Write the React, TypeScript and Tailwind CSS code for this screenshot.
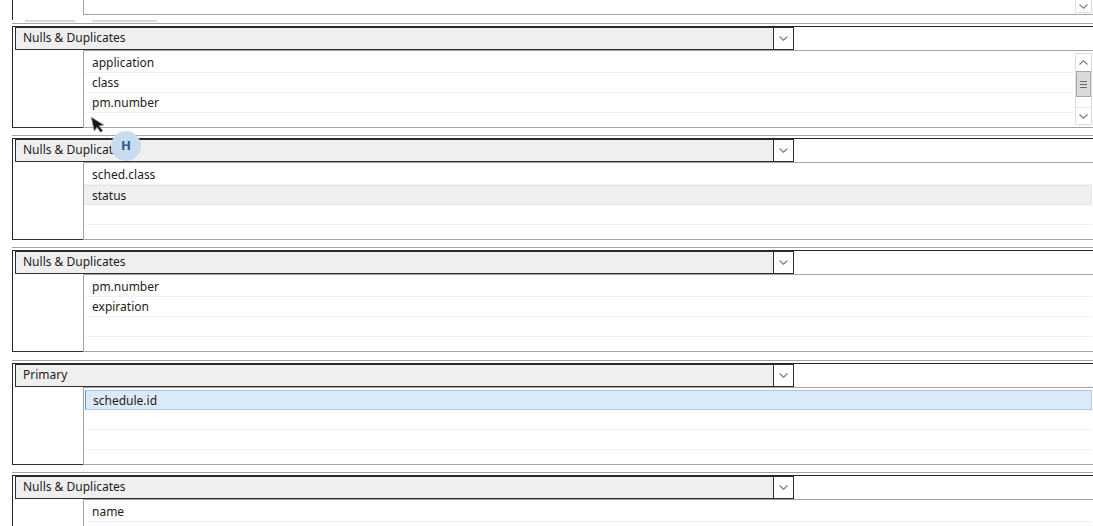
import React from 'react'

type Row = { label: string; kind?: 'plain' | 'gray' | 'selected' }

type Block = {
  title: string
  rows: Row[]
  scroll?: boolean
  tall?: boolean
}

const blocks: Block[] = [
  {
    title: 'Nulls & Duplicates',
    rows: [{ label: 'application' }, { label: 'class' }, { label: 'pm.number' }],
    scroll: true,
  },
  {
    title: 'Nulls & Duplicates',
    rows: [{ label: 'sched.class' }, { label: 'status', kind: 'gray' }],
  },
  {
    title: 'Nulls & Duplicates',
    rows: [{ label: 'pm.number' }, { label: 'expiration' }],
    tall: true,
  },
  {
    title: 'Primary',
    rows: [{ label: 'schedule.id', kind: 'selected' }],
  },
  {
    title: 'Nulls & Duplicates',
    rows: [{ label: 'name' }],
  },
]

function Chevron({ up }: { up?: boolean }) {
  return (
    <svg width="9" height="5" viewBox="0 0 9 5" className="text-[#7a7a7a]">
      <path
        d={up ? 'M0.5 4.5L4.5 0.8L8.5 4.5' : 'M0.5 0.5L4.5 4.2L8.5 0.5'}
        fill="none"
        stroke="currentColor"
        strokeWidth="1.1"
      />
    </svg>
  )
}

function Scrollbar() {
  return (
    <div className="w-[17px] mr-px my-[2px] flex flex-col border border-[#dedede] bg-white">
      <div className="h-[17px] flex items-center justify-center">
        <Chevron up />
      </div>
      <div className="h-[26px] border border-[#a9a9a9] bg-[#dadada] flex flex-col items-center justify-center gap-[2px]">
        <div className="w-[7px] h-px bg-[#6d6d6d]" />
        <div className="w-[7px] h-px bg-[#6d6d6d]" />
        <div className="w-[7px] h-px bg-[#6d6d6d]" />
      </div>
      <div className="flex-1" />
      <div className="h-[17px] border-t border-[#e4e4e4] flex items-center justify-center">
        <Chevron />
      </div>
    </div>
  )
}

function ListRow({ row }: { row?: Row }) {
  if (row?.kind === 'selected') {
    return (
      <div className="h-[20px] shrink-0 ml-px border border-[#a9c8ec] border-l-[#6f8db3] bg-[#dce9f8] pl-[7px] leading-[19px]">
        {row.label}
      </div>
    )
  }
  if (row?.kind === 'gray') {
    return (
      <div className="h-[20px] shrink-0 border-y border-r border-[#e6e6e6] bg-[#f0f0f0] pl-[8px] leading-[19px]">
        {row.label}
      </div>
    )
  }
  return (
    <div className="h-[20px] shrink-0 border-b border-[#f1f1f1] pl-[8px] leading-[20px]">
      {row?.label ?? ''}
    </div>
  )
}

function Section({ block }: { block: Block }) {
  const slots = [0, 1, 2, 3].map(i => block.rows[i])
  return (
    <div className={block.tall ? 'h-[113px] shrink-0 flex flex-col' : 'h-[112px] shrink-0 flex flex-col'}>
      <div className="ml-[12px] h-px bg-[#a3a3a3]" />
      <div className="h-[2px]" />
      <div className="ml-[12px] border-l border-t border-[#262626] flex flex-col">
        {/* combo */}
        <div className="h-[23px] flex">
          <div className="ml-[2px] w-[779px] flex border border-[#2e2e2e]">
            <div className="flex-1 bg-[#efefef] pl-[7px] leading-[20px] whitespace-nowrap">{block.title}</div>
            <div className="w-[20px] border-l border-[#2e2e2e] bg-white flex items-center justify-center">
              <Chevron />
            </div>
          </div>
        </div>
        {/* list */}
        <div className="h-[78px] flex">
          <div className="w-[70px] border-b border-[#2e2e2e]" />
          <div className="flex-1 flex border-y border-l border-[#a3a3a3] bg-white overflow-hidden">
            <div className="flex-1 mr-px flex flex-col pt-[2px]">
              {slots.map((r, i) => (
                <ListRow key={i} row={r} />
              ))}
            </div>
            {block.scroll && <Scrollbar />}
          </div>
        </div>
      </div>
    </div>
  )
}

function Cursor() {
  return (
    <svg width="13" height="19" viewBox="0 0 13 19" className="absolute left-[92px] top-[115px] rotate-[-12deg]">
      <path
        d="M1 1 L1 15 L4.5 11.8 L7 17.5 L9.3 16.5 L6.8 11 L11.5 11 Z"
        fill="#161616"
        stroke="#8a8a8a"
        strokeWidth="0.8"
        strokeLinejoin="round"
      />
    </svg>
  )
}

export default function App() {
  return (
    <div className="relative w-[1093px] h-[526px] overflow-hidden bg-white text-[12px] text-[#1c1c1c] font-['Noto_Sans',sans-serif]">
      {/* previous section, cut off at the top */}
      <div className="h-[23px] flex flex-col">
        <div className="ml-[12px] h-[20px] border-l border-[#262626] flex">
          <div className="w-[70px]" />
          <div className="flex-1 h-[15px] border-l border-b border-[#a3a3a3] flex justify-end">
            <div className="w-[17px] mr-px h-[13px] border-x border-b border-[#dedede] flex items-center justify-center">
              <Chevron />
            </div>
          </div>
        </div>
        {/* faint leftover strokes under the cut-off section */}
        <div className="flex h-[2px]">
          <div className="ml-[25px] w-[50px] bg-[#d9d9d9]" />
          <div className="ml-[17px] w-[65px] bg-[#d9d9d9]" />
        </div>
      </div>

      {blocks.map((b, i) => (
        <Section key={i} block={b} />
      ))}

      {/* overlays: pointer and keyboard hint */}
      <Cursor />
      <div className="absolute left-[111px] top-[131px] w-[30px] h-[30px] rounded-full bg-[#c9dbee] flex items-center justify-center text-[13px] font-bold text-[#2f5d8c]">
        H
      </div>
    </div>
  )
}
